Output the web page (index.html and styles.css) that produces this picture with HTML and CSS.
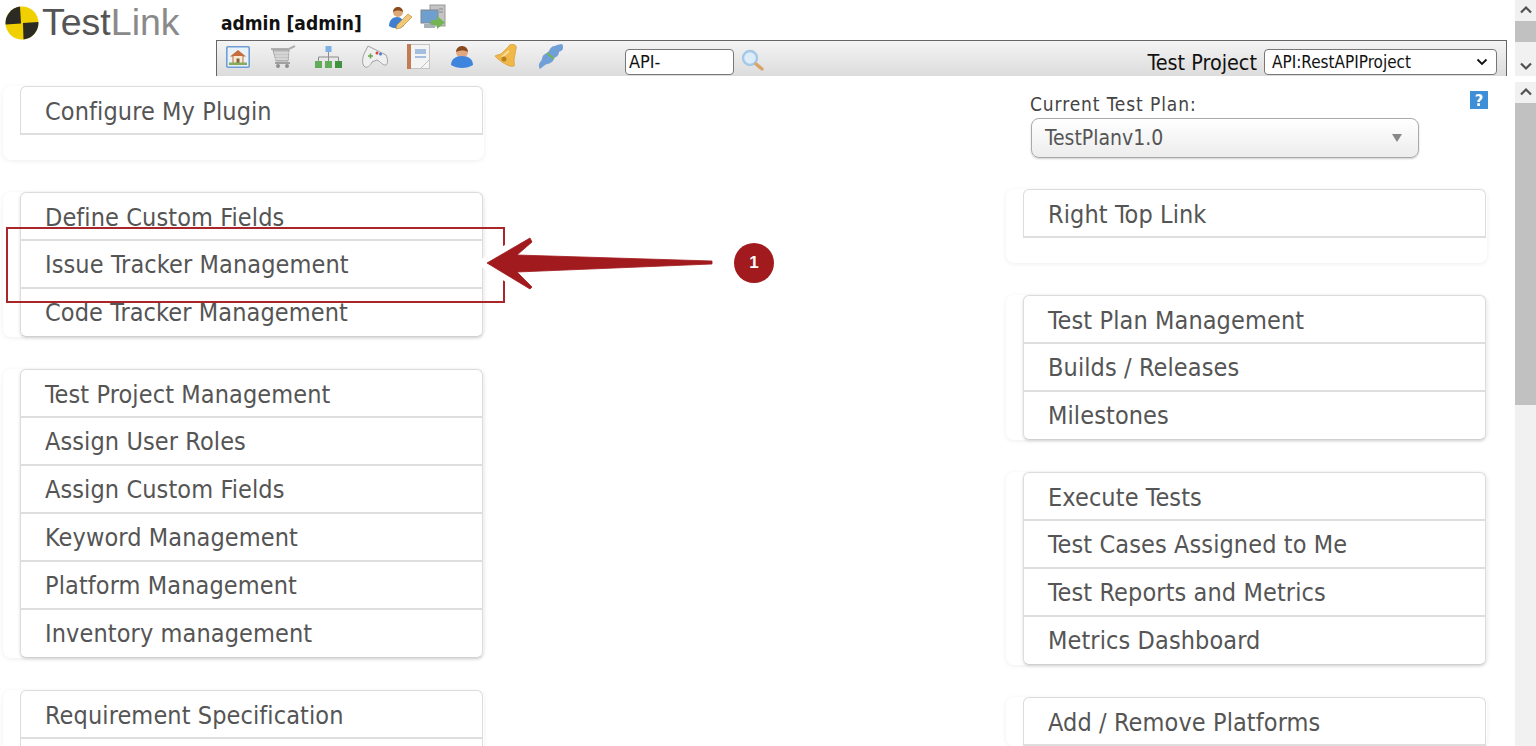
FILE: index.html
```html
<!DOCTYPE html>
<html lang="en">
<head>
<meta charset="utf-8">
<title>TestLink</title>
<link rel="stylesheet" href="styles.css">
</head>
<body>
<header class="topframe">
  <div class="topcontent">
    <div class="brandrow">
      <div class="logo">
        <svg class="logomark" width="34" height="34" viewBox="0 0 34 34">
          <circle cx="17" cy="17" r="16.500" fill="#f0d000"/>
          <path d="M16 17.500 15 .6A16.500 16.500 0 0 0 .6 18.500Z" fill="#2b2b24"/>
          <path d="M18 17 33.400 16A16.500 16.500 0 0 1 18.500 33.400Z" fill="#2b2b24"/>
        </svg>
        <span class="logotext"><span class="logotest">Test</span><span class="logolink">Link</span></span>
      </div>
      <div class="userarea">
        <span class="username">admin [admin]</span>
        <svg class="uicon uicon-a" width="25" height="24" viewBox="0 0 25 24">
          <path d="M1 20c0-6 4-9 8-9s7 3 7 9c-4 3-11 3-15 0Z" fill="#3f7fd0"/>
          <circle cx="10" cy="6" r="5" fill="#dca878"/><path d="M5 6a5 5 0 0 1 10 0c-3-2-7-2-10 0Z" fill="#8a4a1f"/>
          <path d="M9 19 20 8l4 3-11 11-5 1Z" fill="#f0c878" stroke="#c4964a" stroke-width=".8"/>
        </svg>
        <svg class="uicon uicon-b" width="26" height="27" viewBox="0 0 26 27">
          <rect x="10" y="1" width="15" height="21" fill="#c4c4c4" stroke="#999"/>
          <path d="M19 5h4M19 8h4" stroke="#888"/>
          <rect x="1" y="6" width="17" height="13" fill="#6f9fcf" stroke="#808890"/>
          <rect x="4" y="20" width="11" height="4" fill="#aab0b8"/>
          <path d="M11 16h6v-4l8 6.500-8 6.500v-4h-6Z" fill="#74b452"/>
        </svg>
      </div>
    </div>
    <nav class="toolbar">
      <div class="tools">
        <svg class="tool" width="24" height="22" viewBox="0 0 24 22"><rect x=".8" y=".8" width="22.400" height="20.400" rx="1" fill="#e9f1f8" stroke="#6f9ed6" stroke-width="1.600"/><path d="M4 10.500 12 4l8 6.500h-2.500V17h-11v-6.500Z" fill="#c56d3c"/><rect x="7.500" y="10" width="9" height="7" fill="#f4ead6"/><rect x="10.500" y="12.500" width="3" height="4.500" fill="#8a6238"/><rect x="3" y="16.500" width="18" height="2.500" fill="#86ab5a"/></svg>
        <svg class="tool" width="26" height="23" viewBox="0 0 26 23"><path d="M1 4h18l6-3" fill="none" stroke="#b0b0b0" stroke-width="2"/><path d="M3 5h16l-1 11H6Z" fill="#c4c4c4" stroke="#a0a0a0"/><path d="M4 8h15M4.500 11h14M5 14h13" stroke="#e6e6e6"/><rect x="5" y="17" width="15" height="2" fill="#a0a0a0"/><circle cx="8" cy="21" r="2" fill="#8e8e8e"/><circle cx="17" cy="21" r="2" fill="#8e8e8e"/></svg>
        <svg class="tool" width="27" height="22" viewBox="0 0 27 22"><rect x="10.500" y="0" width="6" height="6" fill="#7fb0e6"/><path d="M13.500 6v5M3.500 15v-4h20v4M13.500 11v4" fill="none" stroke="#8c8c8c"/><rect x="0" y="15" width="7" height="7" fill="#62ab5a"/><rect x="10" y="15" width="7" height="7" fill="#62ab5a"/><rect x="20" y="15" width="7" height="7" fill="#3f933f"/></svg>
        <svg class="tool" width="26" height="23" viewBox="0 0 26 23"><path d="M2 9 6 1l18 9c2 4 2 9 0 10-3 1-6-4-9-5l-5 2c-2 4-5 6-7 5C0 20 0 14 2 9Z" fill="#f0f0f0" stroke="#a0a0a0"/><path d="M6 11h5M8.500 8.500v5" stroke="#6aa84f" stroke-width="1.600"/><circle cx="15" cy="8" r="1.500" fill="#d84040"/><circle cx="18.500" cy="9" r="1.500" fill="#4a7ccc"/></svg>
        <svg class="tool" width="23" height="25" viewBox="0 0 23 25"><rect x=".5" y=".5" width="22" height="24" fill="#f4f4f4" stroke="#c4c4c4"/><rect x="0" y="0" width="4" height="25" fill="#c27c54"/><rect x="8" y="5" width="11" height="5" fill="#a4bee0"/><rect x="8" y="12" width="11" height="2" fill="#a4bee0"/><path d="M14 24 22 16" stroke="#c0c0c0"/></svg>
        <svg class="tool" width="24" height="23" viewBox="0 0 24 23"><circle cx="12" cy="7" r="6" fill="#e0a880"/><path d="M6 7a6 6 0 0 1 12 0c-3-2-8-2-12 0Z" fill="#8a4a1f"/><path d="M1 20c0-6 5-9 11-9s11 3 11 9c-6 4-16 4-22 0Z" fill="#3f85de"/></svg>
        <svg class="tool" width="25" height="25" viewBox="0 0 25 25"><path d="M20 0c3 1 4 3 3 5l-2 11c0 3 1 5 0 6-4 2-15-5-19-10 1-1 3-1 6-2l8-8c1-2 2-3 4-2Z" fill="#efb848" stroke="#cf9428" stroke-width=".6"/><path d="M16 7 9 13" stroke="#f8de9a" stroke-width="2"/><circle cx="11" cy="15" r="2.500" fill="#b9801f"/></svg>
        <svg class="tool" width="26" height="25" viewBox="0 0 26 25"><path d="M24 0c2 3 1 6-1 7l-2 1c0 3-2 5-5 6l-1 3c-2 2-4 3-6 3l-2 1-5 4c-2-3-1-6 1-8l1-2c0-3 2-5 5-6l2-2c1-3 3-5 6-5l2-1Z" fill="#719fd8"/><path d="M9 9 16 15" stroke="#74b452" stroke-width="2"/></svg>
      </div>
      <form class="searchbox">
        <input class="tsearch" type="text" value="API-">
        <svg class="magnifier" width="23" height="22" viewBox="0 0 23 22"><circle cx="9" cy="9" r="7" fill="#dcecf9" stroke="#a4c8e8" stroke-width="2.400"/><path d="m15 15 6 5" stroke="#d8a468" stroke-width="3.400" stroke-linecap="round"/></svg>
      </form>
      <div class="projectpick">
        <label class="projlabel">Test Project</label>
        <div class="projselect">
          <span>API:RestAPIProject</span>
          <svg width="12" height="8" viewBox="0 0 12 8"><path d="M1.500 1.500 6 6l4.500-4.500" fill="none" stroke="#111" stroke-width="1.800"/></svg>
        </div>
      </div>
    </nav>
  </div>
  <div class="scrollbar sb-top">
    <svg class="sbarrow" width="14" height="10" viewBox="0 0 14 10"><path d="M2 7.500 7 2.500 12 7.500" fill="none" stroke="#505050" stroke-width="2.200"/></svg>
    <div class="sbthumb-top"></div>
    <div class="sbfill"></div>
    <svg class="sbarrow" width="14" height="10" viewBox="0 0 14 10"><path d="M2 2.500 7 7.500 12 2.500" fill="none" stroke="#505050" stroke-width="2.200"/></svg>
  </div>
</header>
<main class="mainframe">
  <div class="columns">
    <section class="col col-left">
      <div class="panel panel-a">
        <ul class="group"><li>Configure My Plugin</li></ul>
      </div>
      <div class="panel panel-b">
        <ul class="group closed"><li>Define Custom Fields</li><li>Issue Tracker Management</li><li>Code Tracker Management</li></ul>
      </div>
      <div class="panel panel-c">
        <ul class="group closed"><li>Test Project Management</li><li>Assign User Roles</li><li>Assign Custom Fields</li><li>Keyword Management</li><li>Platform Management</li><li>Inventory management</li></ul>
      </div>
      <div class="panel panel-d">
        <ul class="group"><li>Requirement Specification</li><li>&nbsp;</li></ul>
      </div>
    </section>
    <section class="col col-right">
      <div class="planarea">
        <div class="planpick">
          <div class="planlabel">Current Test Plan:</div>
          <div class="planselect"><span>TestPlanv1.0</span><i class="planarrow"></i></div>
        </div>
        <svg class="help" width="18" height="18" viewBox="0 0 18 18"><rect width="18" height="18" fill="#3f8fd8"/><text x="9" y="14.500" text-anchor="middle" class="helpq">?</text></svg>
      </div>
      <div class="panel panel-e">
        <ul class="group"><li>Right Top Link</li></ul>
      </div>
      <div class="panel panel-f">
        <ul class="group closed"><li>Test Plan Management</li><li>Builds / Releases</li><li>Milestones</li></ul>
      </div>
      <div class="panel panel-g">
        <ul class="group closed"><li>Execute Tests</li><li>Test Cases Assigned to Me</li><li>Test Reports and Metrics</li><li>Metrics Dashboard</li></ul>
      </div>
      <div class="panel panel-h">
        <ul class="group"><li>Add / Remove Platforms</li></ul>
      </div>
    </section>
  </div>
  <div class="scrollbar sb-main">
    <svg class="sbarrow" width="14" height="10" viewBox="0 0 14 10"><path d="M2 7.500 7 2.500 12 7.500" fill="none" stroke="#505050" stroke-width="2.200"/></svg>
    <div class="sbthumb-main"></div>
  </div>
</main>
<div class="callout-box"></div>
<svg class="callout-arrow" width="228" height="52" viewBox="0 0 228 52">
  <path d="M1 25 44 0l2 4-15 13 195 6v3L31 34l15 15-2 2Z" fill="#fff" stroke="#fff" stroke-width="13" stroke-linejoin="round"/>
  <path d="M1 25 44 0l2 4-15 13 195 6v3L31 34l15 15-2 2Z" fill="#a11a1e" stroke="#a11a1e" stroke-width=".8" stroke-linejoin="round"/>
</svg>
<div class="callout-badge">1</div>
</body>
</html>
```
FILE: styles.css
```css
* { box-sizing: border-box; }
html, body { margin: 0; height: 100%; overflow: hidden; background: #fff; }
body { font-family: "DejaVu Sans Condensed", "DejaVu Sans", sans-serif; width: 1536px; height: 746px; position: relative; }
ul { list-style: none; margin: 0; padding: 0; }

.topframe { height: 76px; display: flex; }
.topcontent { width: 1515px; display: flex; flex-direction: column; }
.brandrow { height: 40px; display: flex; }
.logo { width: 216px; display: flex; align-items: flex-start; padding: 6px 0 0 5px; }
.logomark { flex: none; filter: blur(.5px); }
.logotext { font-family: "Liberation Sans", Arial, sans-serif; font-size: 37.500px; line-height: 36px; margin: -2px 0 0 3px; }
.logotest { color: #555; }
.logolink { color: #8a8a8a; }
.userarea { display: flex; align-items: flex-start; padding-left: 5px; }
.username { font-size: 19px; font-weight: 700; color: #111; margin-top: 12px; line-height: 22px; width: 167px; flex: none; }
.uicon { flex: none; filter: blur(.4px); }
.uicon-a { margin-top: 6px; margin-right: 7px; }
.uicon-b { margin-top: 4px; }

.toolbar { margin-left: 216px; width: 1291px; height: 36px; display: flex; align-items: center; border: 1px solid #666; border-bottom: 0; background: linear-gradient(#f4f4f4, #dcdcdc); padding-left: 9px; }
.tools { display: flex; align-items: center; gap: 19.500px; width: 399px; flex: none; margin-top: -4px; }
.tool { flex: none; filter: blur(.4px); }
.searchbox { display: flex; align-items: center; gap: 7px; margin-top: 6px; }
.tsearch { width: 109px; height: 26px; border: 1px solid #777; border-radius: 4px; font: 18px "DejaVu Sans Condensed", sans-serif; padding: 0 3px; background: #fff; color: #111; }
.magnifier { flex: none; filter: blur(.4px); margin-top: -3px; }
.projectpick { margin-left: auto; display: flex; align-items: center; gap: 7px; padding-right: 9px; margin-top: 7px; }
.projlabel { font-size: 21.400px; color: #111; }
.projselect { width: 233px; height: 26px; border: 1px solid #777; border-radius: 4px; background: #fff; display: flex; align-items: center; justify-content: space-between; padding: 0 8px 0 7px; font-size: 17px; color: #111; }

.scrollbar { width: 21px; background: #f1f1f1; display: flex; flex-direction: column; align-items: center; flex: none; }
.sb-top { height: 76px; padding-top: 5px; padding-bottom: 5px; }
.sbarrow { flex: none; }
.sbthumb-top { width: 21px; height: 21px; background: #c1c1c1; margin-top: 6px; }
.sbfill { flex: 1; }
.sb-main { height: 664px; padding-top: 5px; }
.sbthumb-main { width: 21px; height: 302px; background: #c1c1c1; margin-top: 6px; }

.mainframe { margin-top: 6px; height: 664px; display: flex; overflow: hidden; }
.columns { width: 1515px; display: flex; overflow: hidden; }
.col { display: flex; flex-direction: column; }
.col-left { width: 1006px; padding: 4px 0 0 3px; flex: none; }
.col-right { width: 480px; flex: none; }

.panel { border-radius: 8px; box-shadow: 0 1px 5px rgba(0, 0, 0, .07); padding-left: 17px; width: 481px; flex: none; }
.group { width: 463px; border: 1px solid #dcdcdc; border-radius: 6px 6px 0 0; border-bottom: 0; }
.group.closed { border-bottom: 1px solid #d0d0d0; border-radius: 6px; box-shadow: 0 1px 3px rgba(0, 0, 0, .15); }
.group li { height: 48px; border-bottom: 2px solid #dedede; font-size: 25px; line-height: 48px; color: #555; padding-left: 24px; white-space: nowrap; letter-spacing: .1px; }
.group li:first-child { line-height: 50px; }
.group.closed li:last-child { border-bottom: 0; height: 47px; }
.panel-a { height: 74px; }
.panel-b { margin-top: 32px; }
.panel-c { margin-top: 32px; }
.panel-d { margin-top: 32px; }
.panel-e { height: 74px; }
.panel-f { margin-top: 32px; }
.panel-g { margin-top: 32px; }
.panel-h { margin-top: 32px; }

.planarea { height: 107px; display: flex; padding: 10px 0 0 24px; align-items: flex-start; }
.planpick { width: 440px; flex: none; }
.planlabel { font-size: 19px; color: #444; line-height: 24px; height: 26px; letter-spacing: .9px; }
.planselect { width: 388px; height: 40px; margin-left: 1px; border: 1px solid #aaa; border-radius: 8px; background: linear-gradient(#fff, #ececec); box-shadow: 0 1px 2px rgba(0, 0, 0, .2); display: flex; align-items: center; justify-content: space-between; padding: 0 16px 0 13px; font-size: 21px; color: #555; }
.planarrow { width: 0; height: 0; border-left: 5px solid transparent; border-right: 5px solid transparent; border-top: 8px solid #888; }
.help { margin-top: -1px; flex: none; filter: blur(.3px); }
.helpq { fill: #fff; font: 700 15px "DejaVu Sans", sans-serif; }

.callout-box { position: absolute; left: 6px; top: 227px; width: 499px; height: 76px; border: 2px solid #a9272b; }
.callout-arrow { position: absolute; left: 486px; top: 238px; overflow: visible; }
.callout-badge { position: absolute; left: 734px; top: 243px; width: 40px; height: 40px; border-radius: 50%; background: #a11a1e; color: #fff; font: 700 17px/40px "Liberation Sans", sans-serif; text-align: center; }
```
